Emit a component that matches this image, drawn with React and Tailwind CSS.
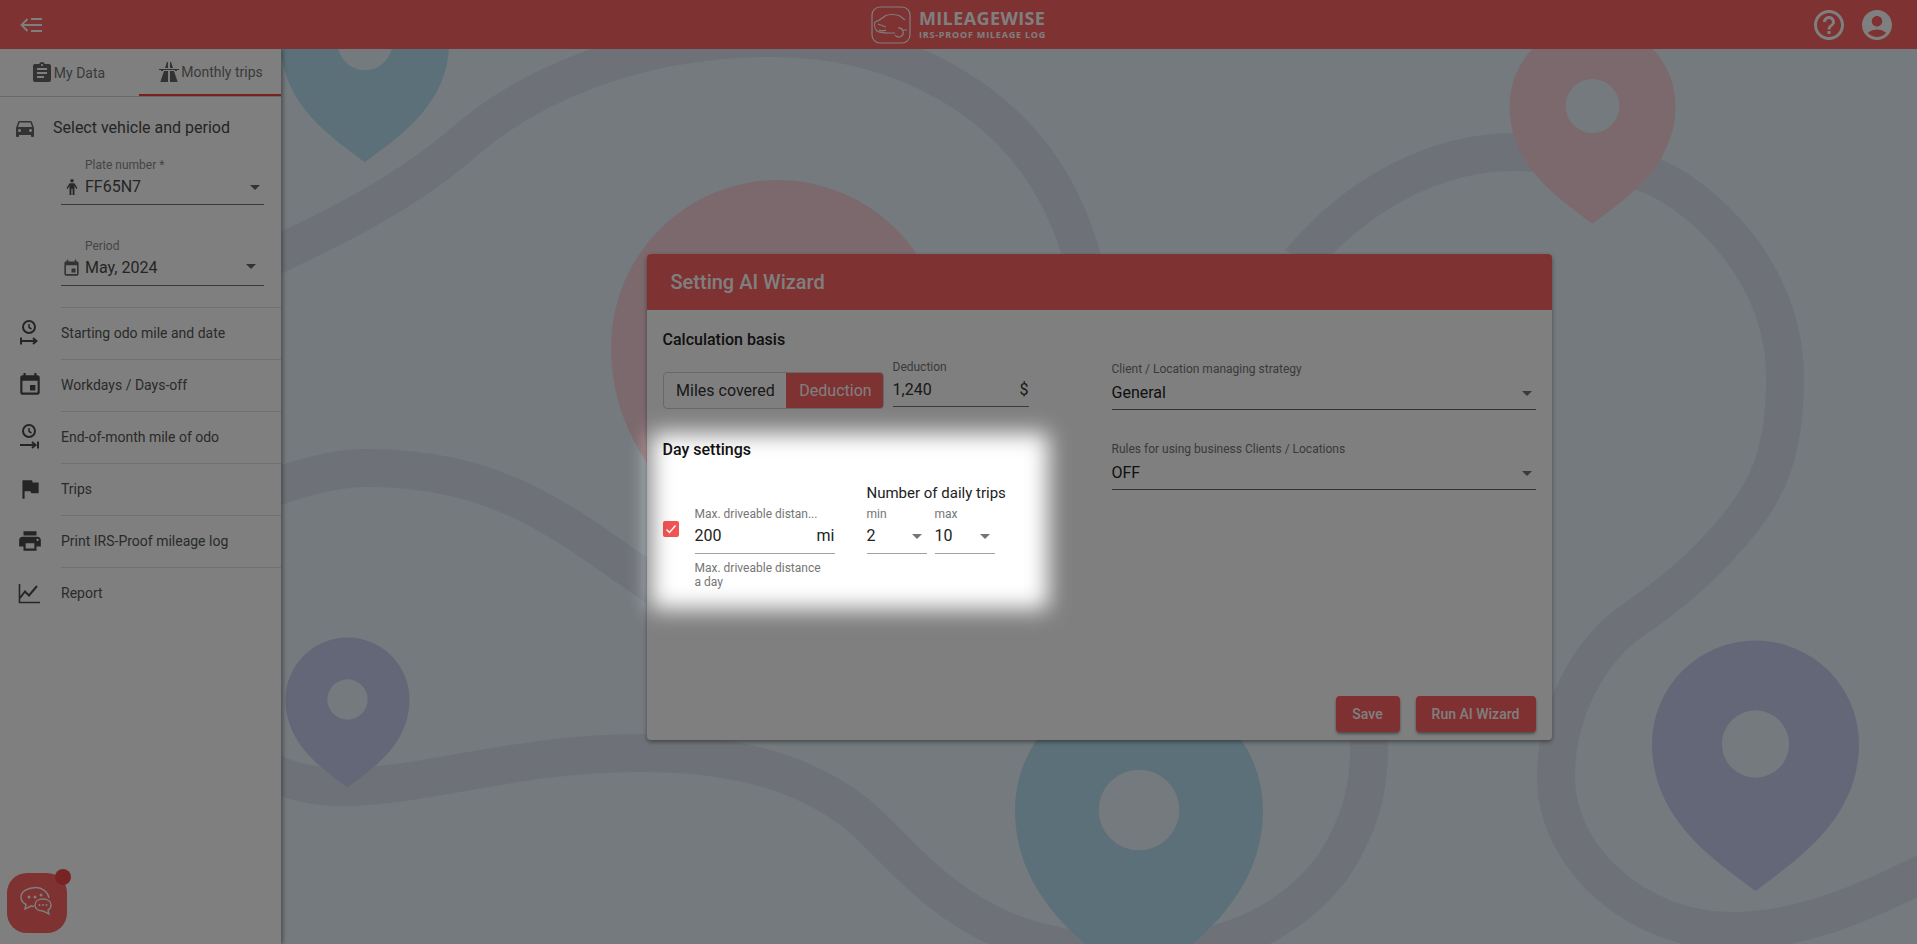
import {
  MdAccountCircle,
  MdArrowDropDown,
  MdAssignment,
  MdDirectionsCar,
  MdEvent,
  MdFlag,
  MdHelpOutline,
  MdPrint,
} from 'react-icons/md';

const PIN = 'M0 1.42C-.35 1.15-1 .75-1 0A1 1 0 0 1 1 0C1 .75.35 1.15 0 1.42ZM.325 0A.325.325 0 1 0-.325 0 .325.325 0 1 0 .325 0Z';

function Pin({ x, y, r, fill }) {
  return <path d={PIN} fill={fill} fillRule="evenodd" transform={`translate(${x} ${y}) scale(${r})`} />;
}

function MapBackground() {
  return (
    <svg className="absolute inset-0 h-full w-full" viewBox="281 49 1636 895">
      <g fill="none" stroke="#dde5f0" strokeWidth="38">
        <path d="M270 258C340 225 400 195 456 149C520 90 630 38 772 38C900 38 1010 100 1060 200C1080 240 1090 280 1095 330" />
        <path d="M270 489C300 478 335 468 367 468C430 468 480 480 530 505C575 528 610 555 660 590" />
        <path d="M270 772C300 785 325 788 348 787C430 785 520 753 639 753C730 753 800 770 856 813C900 850 950 925 1053 945C1090 955 1120 957 1160 955C1250 945 1300 910 1333 867C1360 825 1370 790 1369 740" />
        <path d="M1300 262C1360 190 1440 152 1514 152C1560 152 1610 160 1650 175C1700 195 1785 270 1785 377C1785 450 1770 490 1731 534C1700 570 1670 595 1633 620C1590 650 1556 710 1556 777C1556 860 1640 931 1731 931C1800 931 1860 905 1930 870" />
      </g>
      <Pin x={778} y={347} r={167} fill="#f8d2da" />
      <Pin x={365} y={43} r={84} fill="#b6e0f0" />
      <Pin x={1592.5} y={106} r={83} fill="#f8d2da" />
      <Pin x={347.5} y={699.5} r={62} fill="#c8cef0" />
      <Pin x={1139} y={810} r={124} fill="#b6e0f0" />
      <Pin x={1755.5} y={744} r={103.5} fill="#c8cef0" />
    </svg>
  );
}

function ClockArrow({ end }) {
  return (
    <svg className="h-7 w-6" viewBox="0 0 24 28" fill="none" stroke="#4b4b4b" strokeWidth="2">
      <circle cx="12" cy="8" r="6" />
      <path d="M12 5v3.5l2.5 1.5" strokeWidth="1.5" />
      {end ? <path d="M3 22h15M15 19l3.5 3-3.5 3M21 18.5v7" /> : <path d="M4 18.5v7M4 22h15M16 19l3.5 3-3.5 3" />}
    </svg>
  );
}

function ReportIcon() {
  return (
    <svg className="h-6 w-6" viewBox="0 0 24 24" fill="none" stroke="#4b4b4b" strokeWidth="1.6">
      <path d="M2.500 3v18.500H23" />
      <path d="M3 17l5-6.500 4 4L20 5" strokeWidth="2" />
    </svg>
  );
}

const navItems = [
  { label: 'Starting odo mile and date', icon: <ClockArrow /> },
  { label: 'Workdays / Days-off', icon: <MdEvent className="text-[#4b4b4b]" size={26} /> },
  { label: 'End-of-month mile of odo', icon: <ClockArrow end /> },
  { label: 'Trips', icon: <MdFlag className="text-[#4b4b4b]" size={26} /> },
  { label: 'Print IRS-Proof mileage log', icon: <MdPrint className="text-[#4b4b4b]" size={26} /> },
  { label: 'Report', icon: <ReportIcon /> },
];

function SidebarSelect({ label, value, icon, className, arrowClass }) {
  return (
    <div className={`ml-[61px] w-[203px] border-b border-[#777] pb-[5px] ${className}`}>
      <p className="pl-6 text-xs leading-[14px] text-[#8a8a8a]">{label}</p>
      <div className="mt-[3px] flex h-6 items-center">
        <span className="flex w-6 items-center">{icon}</span>
        <span className="flex-1 text-base text-[#4a4a4a]">{value}</span>
        <MdArrowDropDown className={`text-[#666] ${arrowClass}`} size={24} />
      </div>
    </div>
  );
}

function Sidebar() {
  return (
    <aside className="relative z-10 w-[281px] shrink-0 bg-white shadow-[2px_0_4px_rgba(0,0,0,0.35)]">
      <div className="flex h-12 border-b border-[#d5d5d5] text-sm text-[#757575]">
        <div className="flex w-[139px] items-center justify-center pr-1">
          <MdAssignment className="text-[#666]" size={24} />
          My Data
        </div>
        <div className="flex w-[142px] items-center justify-center border-b-2 border-[#f44336]">
          <svg className="h-6 w-6" viewBox="0 0 24 24" fill="#666">
            <path d="M10 2L8 8h3V2h-1m3 0v6h3l-2-6h-1M2 9v1h2v1h2v-1h12l.06 1H20v-1h2V9H2m5 2L3.34 22H11V11H7m6 0v11h7.66L17 11h-4Z" />
          </svg>
          Monthly trips
        </div>
      </div>

      <div className="mt-[19px] flex h-6 items-center gap-4 pl-[13px] text-base text-[#4a4a4a]">
        <MdDirectionsCar className="text-[#666]" size={24} />
        Select vehicle and period
      </div>

      <SidebarSelect
        className="mt-[18px]"
        arrowClass="-mr-[3px]"
        label="Plate number *"
        value="FF65N7"
        icon={
          <svg className="ml-[4px] h-[16px] w-[14px]" viewBox="0 0 14 16" fill="#555">
            <circle cx="7" cy="1.800" r="1.800" />
            <path d="M4.500 4.200h5l3 5-1.200.7-1.800-3V16H7.600v-6H6.400v6H4.500V6.900l-1.800 3-1.200-.7Z" />
          </svg>
        }
      />
      <SidebarSelect
        className="mt-[34px]"
        arrowClass="mr-[1px] -mt-[5px]"
        label="Period"
        value="May, 2024"
        icon={<MdEvent className="ml-[1px] text-[#666]" size={19} />}
      />

      <div className="mt-[21px]">
        {navItems.map((item) => (
          <div key={item.label} className="flex h-[52px]">
            <div className="flex w-[61px] items-center pl-[17px]">{item.icon}</div>
            <div className="flex flex-1 items-center border-t border-[#dedede] pb-[1px] text-sm text-[#555]">{item.label}</div>
          </div>
        ))}
      </div>
    </aside>
  );
}

function CardSelect({ label, value, className }) {
  return (
    <div className={`border-b border-[#666] pb-[4px] ${className}`}>
      <p className="text-xs leading-[14px] text-[#757575]">{label}</p>
      <div className="mt-[5px] flex h-6 items-center justify-between">
        <span className="text-base text-[#222]">{value}</span>
        <MdArrowDropDown className="-mr-[3px] text-[#757575]" size={24} />
      </div>
    </div>
  );
}

function SmallSelect({ label, value }) {
  return (
    <div className="w-[60px] border-b border-[#a0a0a0] pb-[5px]">
      <p className="text-xs leading-[14px] text-[#757575]">{label}</p>
      <div className="mt-[3px] flex h-6 items-center justify-between">
        <span className="text-base text-[#222]">{value}</span>
        <MdArrowDropDown className="-mr-[2px] text-[#757575]" size={24} />
      </div>
    </div>
  );
}

function WizardCard() {
  return (
    <div className="relative z-10 mt-[1px] flex h-[486px] w-[905px] flex-col overflow-hidden rounded-[4px] bg-white shadow-[0_2px_4px_rgba(0,0,0,0.4)]">
      <div className="flex h-14 shrink-0 items-center bg-[#ff6464] pl-6 text-xl font-medium text-white">Setting AI Wizard</div>

      <div className="flex flex-1 pl-4">
        <div className="w-[449px] shrink-0">
          <h3 className="mt-[18px] text-base leading-6 font-medium text-[#222]">Calculation basis</h3>
          <div className="mt-2 flex items-start">
            <div className="mt-3 flex h-[37px] overflow-hidden rounded-[4px] border border-[#d0d0d0] text-base">
              <div className="flex w-[122px] items-center justify-center pl-[2px] text-[#333]">Miles covered</div>
              <div className="flex w-[97px] items-center justify-center bg-[#ff6464] pl-[3px] text-white">Deduction</div>
            </div>
            <div className="ml-[9px] w-[136px] border-b border-[#777] pb-[4px]">
              <p className="text-xs leading-[14px] text-[#757575]">Deduction</p>
              <div className="mt-1 flex h-6 items-center justify-between text-base text-[#333]">
                <span>1,240</span>
                <span>$</span>
              </div>
            </div>
          </div>

          <h3 className="mt-[29px] text-base leading-6 font-medium text-[#111]">Day settings</h3>
          <div className="mt-[19px] flex items-start">
            <div className="mt-10 flex h-4 w-4 items-center justify-center rounded-[2px] bg-[#f25555]">
              <svg className="h-[14px] w-[14px]" viewBox="0 0 14 14" fill="none" stroke="#fff" strokeWidth="1.500">
                <path d="M2.500 7.500l3 3L11.500 3.500" />
              </svg>
            </div>
            <div className="mt-[26px] ml-4 w-[140px]">
              <div className="border-b border-[#a0a0a0] pb-[5px]">
                <p className="text-xs leading-[14px] text-[#757575]">Max. driveable distan...</p>
                <div className="mt-[3px] flex h-6 items-center justify-between text-base text-[#222]">
                  <span>200</span>
                  <span>mi</span>
                </div>
              </div>
              <p className="mt-[7px] pr-2 text-xs leading-[14px] text-[#757575]">Max. driveable distance a day</p>
            </div>
            <div className="ml-8">
              <p className="text-[15px] leading-6 text-[#222]">Number of daily trips</p>
              <div className="mt-[2px] flex gap-2">
                <SmallSelect label="min" value="2" />
                <SmallSelect label="max" value="10" />
              </div>
            </div>
          </div>
        </div>

        <div className="w-[424px] pt-[52px]">
          <CardSelect label="Client / Location managing strategy" value="General" />
          <CardSelect className="mt-8" label="Rules for using business Clients / Locations" value="OFF" />
        </div>
      </div>

      <div className="flex justify-end gap-4 pr-4 pb-2 text-sm font-medium text-white">
        <div className="flex h-9 w-16 items-center justify-center rounded-[4px] bg-[#ff6060] shadow-[0_2px_3px_rgba(0,0,0,0.4)]">Save</div>
        <div className="flex h-9 w-[120px] items-center justify-center rounded-[4px] bg-[#ff6060] shadow-[0_2px_3px_rgba(0,0,0,0.4)]">Run AI Wizard</div>
      </div>
    </div>
  );
}

function Logo() {
  return (
    <div className="flex items-center gap-2 text-white">
      <svg className="h-[38px] w-10" viewBox="0 0 40 38" fill="none" stroke="currentColor" strokeWidth="1.200">
        <rect x="1" y="1" width="38" height="36" rx="8" />
        <path d="M4 16c4-1 6-3 10-6 3-2 10-2 15 0l5 4M4 16c-1 3 0 7 2 9 3 2 8 2 12 2h6" />
        <path d="M7 18l8 3M8 24c2 1 5 1 7 0M27 22a4.500 4.500 0 1 1-3 7M32 24h4" />
      </svg>
      <div className="font-['Open_Sans',sans-serif] font-bold whitespace-nowrap">
        <p className="text-[18px] leading-[19px] tracking-[0.4px]">MILEAGEWISE</p>
        <p className="mt-[1px] text-[9px] leading-[11px] tracking-[0.8px]">IRS-PROOF MILEAGE LOG</p>
      </div>
    </div>
  );
}

function Header() {
  return (
    <header className="relative z-20 grid h-[49px] grid-cols-[1fr_auto_1fr] items-center bg-[#ff6464] text-white">
      <div className="pl-5">
        <svg className="h-[14px] w-[22px]" viewBox="0 0 22 14" fill="none" stroke="currentColor" strokeWidth="1.800">
          <path d="M7.500 1L1.500 7l6 6M2 7h20M11 1h11M11 13h11" />
        </svg>
      </div>
      <Logo />
      <div className="flex items-center justify-end gap-3 pr-[22px]">
        <MdHelpOutline size={36} />
        <MdAccountCircle size={36} />
      </div>
    </header>
  );
}

function ChatButton() {
  return (
    <div className="absolute bottom-[11px] left-[7px] z-20 flex h-[60px] w-[60px] items-center justify-center rounded-[20px] bg-[#ff6464]">
      <svg className="h-9 w-9" viewBox="0 0 36 36" fill="none" stroke="#fff" strokeWidth="1.400">
        <path d="M17 2.500C9 2.500 2 6.500 2 12c0 3 2 6 5 7.500L6 24l6-3c1 .2 2 .3 3 .3" />
        <path d="M30 13c-1-6-7-10.500-13-10.500" />
        <path d="M24 14c-5 0-8 2.500-8 6s3 6 8 6l6 3-1-4c2-1 3-3 3-5 0-3.500-3-6-8-6Z" />
        <g fill="#fff" stroke="none">
          <circle cx="10" cy="12" r="1.500" />
          <circle cx="16" cy="12" r="1.500" />
          <circle cx="22" cy="10" r="1.500" />
          <circle cx="20.500" cy="20" r="1" />
          <circle cx="24" cy="20" r="1" />
          <circle cx="27.500" cy="20" r="1" />
        </g>
      </svg>
      <span className="absolute -top-[4px] -right-[4px] h-4 w-4 rounded-full bg-[#f24848]" />
    </div>
  );
}

export default function App() {
  return (
    <div className="relative h-screen overflow-hidden bg-[#e8f4fc] font-['Roboto',sans-serif]">
      <Header />
      <div className="flex h-[895px]">
        <Sidebar />
        <main className="relative flex flex-1 items-center justify-center">
          <MapBackground />
          <WizardCard />
        </main>
      </div>
      <ChatButton />

      {/* tour overlay: dims everything but the day settings block */}
      <div className="pointer-events-none absolute inset-0 z-50 overflow-hidden">
        <div className="absolute top-[433px] left-[651px] h-[176px] w-[397px] rounded-[4px] shadow-[0_0_0_2000px_rgba(0,0,0,0.5)] blur-[11px]" />
      </div>
    </div>
  );
}
